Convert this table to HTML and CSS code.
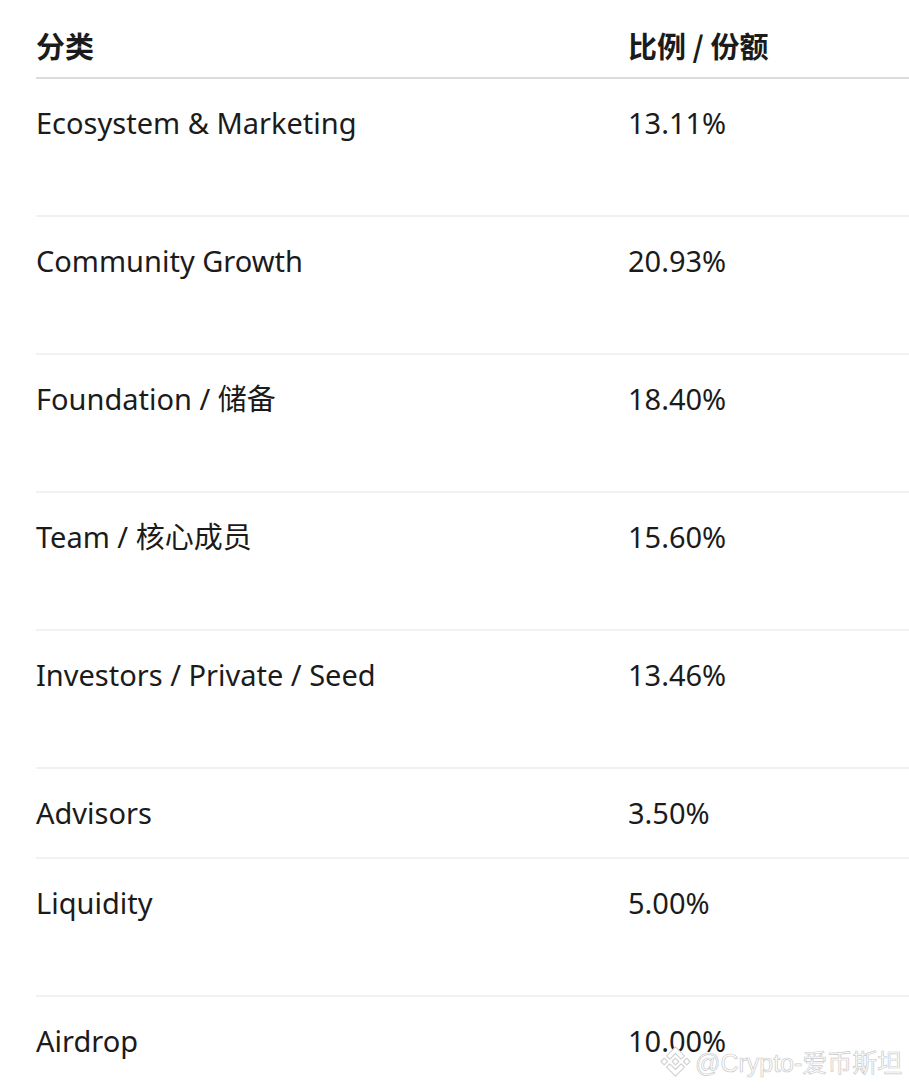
FILE: index.html
```html
<!DOCTYPE html>
<html lang="zh">
<head>
<meta charset="utf-8">
<link rel="stylesheet" href="styles.css">
</head>
<body>
<div class="page">
  <table class="alloc">
    <thead>
      <tr><th class="c1">分类</th><th class="c2">比例 / 份额</th></tr>
    </thead>
    <tbody>
      <tr class="tall"><td class="c1">Ecosystem &amp; Marketing</td><td class="c2">13.11%</td></tr>
      <tr class="tall"><td class="c1">Community Growth</td><td class="c2">20.93%</td></tr>
      <tr class="tall"><td class="c1">Foundation / 储备</td><td class="c2">18.40%</td></tr>
      <tr class="tall"><td class="c1">Team / 核心成员</td><td class="c2">15.60%</td></tr>
      <tr class="tall"><td class="c1">Investors / Private / Seed</td><td class="c2">13.46%</td></tr>
      <tr><td class="c1">Advisors</td><td class="c2">3.50%</td></tr>
      <tr class="tall"><td class="c1">Liquidity</td><td class="c2">5.00%</td></tr>
      <tr class="tall"><td class="c1">Airdrop</td><td class="c2">10.00%</td></tr>
    </tbody>
  </table>
  <div class="watermark">
    <svg class="wm-logo" viewBox="-4 -4 134.61 134.61" width="31" height="31">
      <g fill="#ffffff" stroke="#d2d2d2" stroke-width="5" stroke-linejoin="round">
        <path d="M38.73 53.2 L63.3 28.64 L87.89 53.23 L102.19 38.93 L63.3 0 L24.43 38.9 Z"/>
        <path d="M0 63.31 L14.3 49.01 L28.6 63.31 L14.3 77.61 Z"/>
        <path d="M38.73 73.41 L63.3 97.97 L87.89 73.39 L102.2 87.68 L63.3 126.61 L24.42 87.72 Z"/>
        <path d="M98.01 63.31 L112.31 49.01 L126.61 63.31 L112.31 77.61 Z"/>
        <path d="M77.81 63.3 L63.3 48.78 L48.79 63.28 L63.3 77.8 Z"/>
      </g>
    </svg>
    <span class="wm-text">@Crypto-爱币斯坦</span>
  </div>
</div>
</body>
</html>
```
FILE: styles.css
```css
html, body {
  margin: 0;
  padding: 0;
  background: #ffffff;
}
body {
  font-family: "Noto Sans", "Noto Sans CJK SC", sans-serif;
  color: #1b1b1b;
  overflow: hidden;
}
.page {
  position: relative;
  width: 909px;
  height: 1088px;
  padding-left: 36px;
  box-sizing: border-box;
  overflow: hidden;
}
.alloc {
  border-collapse: collapse;
  width: 873px;
  font-size: 29px;
}
.alloc th {
  text-align: left;
  font-weight: 700;
  font-size: 29px;
  font-family: "Noto Sans CJK SC", sans-serif;
  padding: 21px 0 8px 0;
  line-height: 48px;
  border-bottom: 2px solid #dcdcdc;
}
.alloc td {
  vertical-align: top;
  padding: 20px 0;
  line-height: 48px;
  border-bottom: 2px solid #f2f2f2;
}
.alloc tr.tall td {
  height: 96px;
}
.alloc tr:last-child td {
  border-bottom: none;
}
.c1 {
  width: 592px;
}
.watermark {
  position: absolute;
  left: 660px;
  top: 1043px;
  display: flex;
  align-items: center;
  gap: 4px;
}
.wm-text {
  font-family: "Liberation Sans", "Noto Sans CJK SC", sans-serif;
  font-size: 25px;
  color: #ffffff;
  -webkit-text-stroke: 0.7px #cbcbcb;
}
```
